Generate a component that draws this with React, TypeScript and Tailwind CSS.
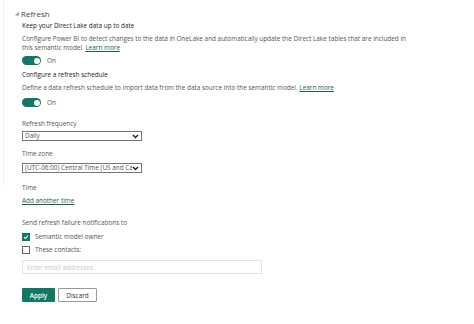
import React from "react";

function Toggle() {
  return (
    <div className="h-[9px] flex items-center gap-[6px]">
      <div className="w-[19px] h-[9px] rounded-full bg-[#117865] flex items-center justify-end pr-[1.5px]">
        <div className="w-[6px] h-[6px] rounded-full bg-white" />
      </div>
      <span className="text-[#555]">On</span>
    </div>
  );
}

function Select({ value }: { value: string }) {
  return (
    <div className="w-[120px] h-[10px] border border-[#777] flex items-center justify-between pl-[2px] pr-[2px] text-[#555] bg-white">
      <span className="whitespace-nowrap overflow-hidden leading-[8px]">{value}</span>
      <svg width="7" height="5" viewBox="0 0 7 5" className="shrink-0">
        <path d="M1 1 L3.5 3.6 L6 1" stroke="#222" strokeWidth="1.4" fill="none" />
      </svg>
    </div>
  );
}

export default function App() {
  return (
    <div
      className="w-[474px] h-[324px] bg-white relative text-[6.4px] leading-[9px] text-[#555]"
      style={{ fontFamily: '"Open Sans", "Noto Sans", sans-serif' }}
    >
      <div className="absolute left-[3px] top-0 h-[185px] w-px bg-[#f2f2f2]" />
      <div className="pt-[8px] pl-[15px]">
        <div className="h-[11px] flex items-center gap-[2px] text-[8px] leading-[11px] text-[#444]">
          <span className="text-[5px] text-[#999]">◢</span>
          <span>Refresh</span>
        </div>
        <div className="pl-[7px]">
          <div className="mt-[2px] text-[#222]">Keep your Direct Lake data up to date</div>
          <div className="mt-[4px] w-[392px]">
            Configure Power BI to detect changes to the data in OneLake and automatically update the Direct Lake tables that are included in this semantic model.{" "}
            <span className="underline text-[#1d5e53]">Learn more</span>
          </div>
          <div className="mt-[4px]">
            <Toggle />
          </div>
          <div className="mt-[5px] text-[#222]">Configure a refresh schedule</div>
          <div className="mt-[4px]">
            Define a data refresh schedule to import data from the data source into the semantic model.{" "}
            <span className="underline text-[#1d5e53]">Learn more</span>
          </div>
          <div className="mt-[6px]">
            <Toggle />
          </div>
          <div className="mt-[12px]">Refresh frequency</div>
          <div className="mt-[3px]">
            <Select value="Daily" />
          </div>
          <div className="mt-[8px]">Time zone</div>
          <div className="mt-[5px]">
            <Select value="(UTC-06:00) Central Time (US and Canada)" />
          </div>
          <div className="mt-[10px]">Time</div>
          <div className="mt-[4px] underline text-[#1d5e53]">Add another time</div>
          <div className="mt-[13px]">Send refresh failure notifications to</div>
          <div className="mt-[5px] h-[9px] flex items-center gap-[5px]">
            <div className="w-[8px] h-[8px] bg-[#117865] flex items-center justify-center">
              <svg width="6" height="6" viewBox="0 0 6 6">
                <path d="M1 3.2 L2.4 4.5 L5 1.5" stroke="white" strokeWidth="1.1" fill="none" />
              </svg>
            </div>
            <span>Semantic model owner</span>
          </div>
          <div className="mt-[4px] h-[9px] flex items-center gap-[5px]">
            <div className="w-[8px] h-[8px] border border-[#666] bg-white" />
            <span>These contacts:</span>
          </div>
          <div className="mt-[6px] w-[240px] h-[14px] border border-[#e3e3e3] flex items-center pl-[4px] text-[#c8c8c8]">
            Enter email addresses
          </div>
          <div className="mt-[14px] flex gap-[3px]">
            <div className="w-[33px] h-[14px] bg-[#117865] text-white font-semibold flex items-center justify-center rounded-[1px]">
              Apply
            </div>
            <div className="w-[39px] h-[14px] border border-[#999] text-[#333] flex items-center justify-center rounded-[1px]">
              Discard
            </div>
          </div>
        </div>
      </div>
    </div>
  );
}
